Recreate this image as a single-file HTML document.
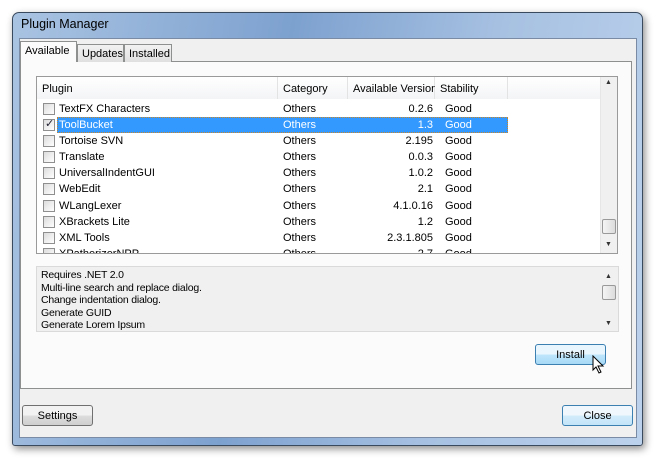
<!DOCTYPE html>
<html><head><style>
*{box-sizing:border-box;margin:0;padding:0}
body{width:660px;height:461px;background:#fff;position:relative;overflow:hidden;font-family:"Liberation Sans",sans-serif;font-size:11px;color:#000;white-space:nowrap}
.abs{position:absolute}
#frame{left:12px;top:12px;width:631px;height:434px;border:1px solid #3a4a5e;border-radius:7px 7px 3px 3px;background:linear-gradient(100deg,#a9c3e2 0%,#7da1cf 40%,#a7c1e2 70%,#bcd2ec 100%);box-shadow:2px 3px 8px rgba(0,0,0,.45)}
#title{left:21px;top:17px;font-size:12.5px;color:#000}
#client{left:19px;top:38px;width:618px;height:400px;background:#f0f0f0;border:1px solid #7a8ca5}
.tab{position:absolute;top:44px;height:18px;border:1px solid #8e8f8f;border-bottom:none;background:linear-gradient(#f2f2f2,#e0e0e0);font-size:11px;padding:3px 0 0 4px}
#panel{left:20px;top:61px;width:612px;height:328px;background:#fbfbfb;border:1px solid #8e8f8f}
#list{left:36px;top:76px;width:582px;height:178px;background:#fff;border:1px solid #9a9a9a;overflow:hidden}
.hd{position:absolute;top:0;height:22px;border-right:1px solid #e3e3e3;background:linear-gradient(#fff,#f3f4f6);padding:6px 0 0 5px}
.row{position:absolute;left:0;height:16px;width:560px}
.cb{position:absolute;left:6px;top:2px;width:12px;height:12px;border:1px solid #8f8f8f;background:linear-gradient(135deg,#dcdcdc,#fff)}
.c{position:absolute;top:2px}
.sb{position:absolute;right:0;top:0;width:17px;height:100%;background:#f0f0f0;border-left:1px solid #e6e6e6}
.btn{position:absolute;height:21px;border:1px solid #707070;border-radius:3px;background:linear-gradient(#f2f2f2 50%,#dddddd 51%,#cfcfcf);text-align:center;padding-top:4px;font-size:11px}
#desc{left:36px;top:266px;width:583px;height:66px;background:#f0f0f0;border:1px solid #dadada;font-size:10.5px;line-height:12.6px;padding:2px 0 0 4px;letter-spacing:-0.2px}
</style></head><body>
<div class="abs" id="frame"></div>
<div class="abs" id="title">Plugin Manager</div>
<div class="abs" id="client"></div>
<div class="abs" id="panel"></div>
<div class="tab" style="left:20px;top:41px;height:21px;width:57px;background:#fbfbfb;z-index:2">Available</div>
<div class="tab" style="left:77px;width:47px">Updates</div>
<div class="tab" style="left:124px;width:48px">Installed</div>
<div class="abs" id="list">
 <div class="hd" style="left:0;width:241px">Plugin</div>
 <div class="hd" style="left:241px;width:70px">Category</div>
 <div class="hd" style="left:311px;width:87px;text-align:right;padding-right:5px">Available Version</div>
 <div class="hd" style="left:398px;width:73px">Stability</div>
 <div class="hd" style="left:471px;width:93px;border-right:none"></div>
 <div style="position:absolute;left:0;top:24px;width:564px">
 <div class="row" style="top:0"><div class="cb"></div><div class="c" style="left:22px">TextFX Characters</div><div class="c" style="left:246px">Others</div><div class="c" style="left:311px;width:85px;text-align:right">0.2.6</div><div class="c" style="left:408px">Good</div></div>
 <div class="row" style="top:16px"><div class="cb"><span style="position:absolute;left:1px;top:-3px;font-size:11px;color:#223">✓</span></div><div style="position:absolute;left:20px;top:0;width:451px;height:16px;background:#3399ff;border:1px dotted #c8862a"></div><div class="c" style="left:22px;color:#fff">ToolBucket</div><div class="c" style="left:246px;color:#fff">Others</div><div class="c" style="left:311px;width:85px;text-align:right;color:#fff">1.3</div><div class="c" style="left:408px;color:#fff">Good</div></div>
 <div class="row" style="top:32px"><div class="cb"></div><div class="c" style="left:22px">Tortoise SVN</div><div class="c" style="left:246px">Others</div><div class="c" style="left:311px;width:85px;text-align:right">2.195</div><div class="c" style="left:408px">Good</div></div>
 <div class="row" style="top:48px"><div class="cb"></div><div class="c" style="left:22px">Translate</div><div class="c" style="left:246px">Others</div><div class="c" style="left:311px;width:85px;text-align:right">0.0.3</div><div class="c" style="left:408px">Good</div></div>
 <div class="row" style="top:64px"><div class="cb"></div><div class="c" style="left:22px">UniversalIndentGUI</div><div class="c" style="left:246px">Others</div><div class="c" style="left:311px;width:85px;text-align:right">1.0.2</div><div class="c" style="left:408px">Good</div></div>
 <div class="row" style="top:80px"><div class="cb"></div><div class="c" style="left:22px">WebEdit</div><div class="c" style="left:246px">Others</div><div class="c" style="left:311px;width:85px;text-align:right">2.1</div><div class="c" style="left:408px">Good</div></div>
 <div class="row" style="top:97px"><div class="cb"></div><div class="c" style="left:22px">WLangLexer</div><div class="c" style="left:246px">Others</div><div class="c" style="left:311px;width:85px;text-align:right">4.1.0.16</div><div class="c" style="left:408px">Good</div></div>
 <div class="row" style="top:113px"><div class="cb"></div><div class="c" style="left:22px">XBrackets Lite</div><div class="c" style="left:246px">Others</div><div class="c" style="left:311px;width:85px;text-align:right">1.2</div><div class="c" style="left:408px">Good</div></div>
 <div class="row" style="top:129px"><div class="cb"></div><div class="c" style="left:22px">XML Tools</div><div class="c" style="left:246px">Others</div><div class="c" style="left:311px;width:85px;text-align:right">2.3.1.805</div><div class="c" style="left:408px">Good</div></div>
 <div class="row" style="top:145px"><div class="cb"></div><div class="c" style="left:22px">XPatherizerNPP</div><div class="c" style="left:246px">Others</div><div class="c" style="left:311px;width:85px;text-align:right">2.7</div><div class="c" style="left:408px">Good</div></div>
 </div>
 <div class="sb"><div style="position:absolute;left:4px;top:2px;font-size:7px;color:#333">▲</div><div style="position:absolute;left:1px;top:142px;width:14px;height:15px;border:1px solid #999;border-radius:2px;background:linear-gradient(90deg,#f4f4f4,#dcdcdc)"></div><div style="position:absolute;left:4px;top:164px;font-size:7px;color:#333">▼</div></div>
</div>
<div class="abs" id="desc">Requires .NET 2.0<br>Multi-line search and replace dialog.<br>Change indentation dialog.<br>Generate GUID<br>Generate Lorem Ipsum
 <div class="sb" style="border-left:none"><div style="position:absolute;left:4px;top:4px;font-size:7px;color:#333">▲</div><div style="position:absolute;left:1px;top:18px;width:14px;height:15px;border:1px solid #999;border-radius:2px;background:linear-gradient(90deg,#f4f4f4,#dcdcdc)"></div><div style="position:absolute;left:4px;top:51px;font-size:7px;color:#333">▼</div></div>
</div>
<div class="btn" style="left:535px;top:344px;width:71px;border-color:#3c7fb1;background:linear-gradient(#eaf6fd 50%,#bee6fd 51%,#a7d9f5)">Install</div>
<svg class="abs" style="left:592px;top:355px" width="14" height="20" viewBox="0 0 14 20"><path d="M1 1 L1 15 L4 12 L7 18 L9 17 L6 11 L11 11 Z" fill="#fff" stroke="#000" stroke-width="1"/></svg>
<div class="btn" style="left:22px;top:405px;width:71px">Settings</div>
<div class="btn" style="left:562px;top:405px;width:71px;border-color:#3c7fb1;background:linear-gradient(#f0f8fd 50%,#d2ecfb 51%,#c3e4f8)">Close</div>
</body></html>
